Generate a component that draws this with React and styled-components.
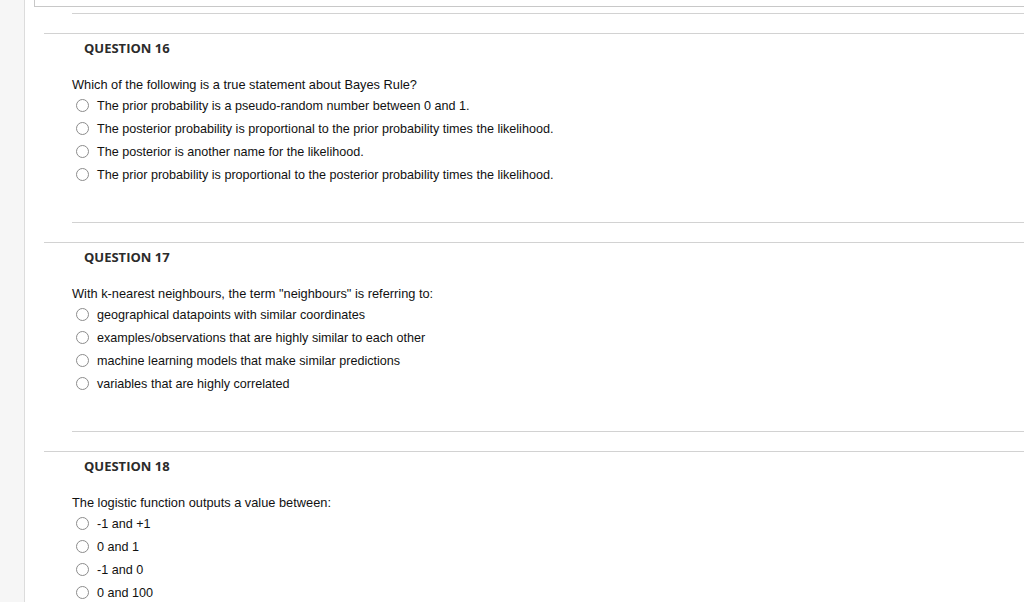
import React from 'react';
import styled, { createGlobalStyle } from 'styled-components';

const questions = [
  {
    number: 16,
    text: 'Which of the following is a true statement about Bayes Rule?',
    options: [
      'The prior probability is a pseudo-random number between 0 and 1.',
      'The posterior probability is proportional to the prior probability times the likelihood.',
      'The posterior is another name for the likelihood.',
      'The prior probability is proportional to the posterior probability times the likelihood.',
    ],
  },
  {
    number: 17,
    text: 'With k-nearest neighbours, the term "neighbours" is referring to:',
    options: [
      'geographical datapoints with similar coordinates',
      'examples/observations that are highly similar to each other',
      'machine learning models that make similar predictions',
      'variables that are highly correlated',
    ],
  },
  {
    number: 18,
    text: 'The logistic function outputs a value between:',
    options: ['-1 and +1', '0 and 1', '-1 and 0', '0 and 100'],
  },
];

const GlobalStyle = createGlobalStyle`
  html, body {
    margin: 0;
    padding: 0;
    background: #fff;
    overflow: hidden;
  }
  body {
    font-family: 'Liberation Sans', Arial, sans-serif;
  }
`;

export default function App() {
  return (
    <>
      <GlobalStyle />
      <Page>
        <SideStrip />
        <Main>
          <TopBox />
          <Separator />
          {questions.map(q => (
            <QuestionBlock key={q.number}>
              <Title>QUESTION {q.number}</Title>
              <Prompt>{q.text}</Prompt>
              <Options>
                {q.options.map(opt => (
                  <Option key={opt}>
                    <Radio />
                    <span>{opt}</span>
                  </Option>
                ))}
              </Options>
              <Separator />
            </QuestionBlock>
          ))}
        </Main>
      </Page>
    </>
  );
}

const Page = styled.div`
  display: flex;
  width: 1024px;
  height: 602px;
  overflow: hidden;
`;

const SideStrip = styled.div`
  flex: 0 0 24px;
  background: #f6f6f6;
  border-right: 1px solid #dcdcdc;
`;

const Main = styled.div`
  flex: 1;
  display: flex;
  flex-direction: column;

  & > * {
    flex-shrink: 0;
  }
`;

const TopBox = styled.div`
  height: 6px;
  margin-left: 9px;
  border-left: 1px solid #c8c8c8;
  border-bottom: 1px solid #c8c8c8;
`;

const Separator = styled.div`
  flex-shrink: 0;
  margin-left: 47px;
  margin-top: 6px;
  border-top: 1px solid #d2d2d2;
`;

const QuestionBlock = styled.section`
  margin-left: 19px;
  margin-top: 19px;
  border-top: 1px solid #d2d2d2;
  display: flex;
  flex-direction: column;

  ${Separator} {
    margin-left: 28px;
    margin-top: 36px;
  }
`;

const Title = styled.h2`
  margin: 6px 0 0 40px;
  font-family: 'Open Sans', sans-serif;
  font-weight: 700;
  font-size: 13px;
  line-height: 16px;
  color: #2b2b2b;
`;

const Prompt = styled.p`
  margin: 21px 0 0 28px;
  font-size: 12.8px;
  line-height: 15px;
  color: #111;
`;

const Options = styled.ul`
  list-style: none;
  margin: 2px 0 0 32px;
  padding: 0;
  display: flex;
  flex-direction: column;
`;

const Option = styled.li`
  display: flex;
  align-items: center;
  gap: 8px;
  height: 23px;
  font-size: 12.6px;
  color: #111;
`;

const Radio = styled.span`
  box-sizing: border-box;
  width: 13px;
  height: 13px;
  border-radius: 50%;
  border: 1px solid #8c8c8c;
  background: #fff;
  flex: 0 0 13px;
`;
